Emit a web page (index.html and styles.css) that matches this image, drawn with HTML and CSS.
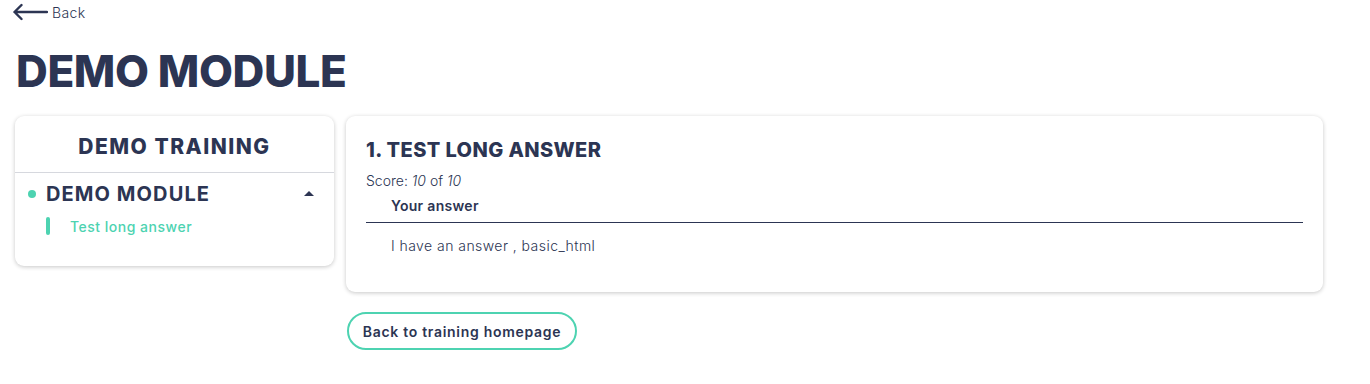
FILE: index.html
```html
<!DOCTYPE html>
<html lang="en">
<head>
<meta charset="utf-8">
<title>Demo Module</title>
<link rel="stylesheet" href="styles.css">
</head>
<body>
<div class="page">
  <a class="back" href="#">
    <svg class="back-arrow" width="36" height="18" viewBox="0 0 36 18" aria-hidden="true">
      <path d="M35 9H2.5M9.5 2L2.5 9l7 7" fill="none" stroke="#2c3553" stroke-width="2.4" stroke-linecap="round" stroke-linejoin="round"/>
    </svg>
    <span>Back</span>
  </a>
  <h1 class="page-title">DEMO MODULE</h1>
  <div class="layout">
    <aside class="sidebar">
      <div class="sidebar-head">DEMO TRAINING</div>
      <div class="module-row">
        <span class="dot"></span>
        <span class="module-name">DEMO MODULE</span>
        <span class="caret"></span>
      </div>
      <div class="sub-item">
        <span class="bar"></span>
        <span class="sub-text">Test long answer</span>
      </div>
    </aside>
    <main class="content">
      <section class="card">
        <h2 class="q-title">1. TEST LONG ANSWER</h2>
        <div class="score">Score: <em>10</em> of <em>10</em></div>
        <div class="answer-head">Your answer</div>
        <div class="answer-text">I have an answer , basic_html</div>
      </section>
      <button class="home-btn">Back to training homepage</button>
    </main>
  </div>
</div>
</body>
</html>
```

FILE: styles.css
```css
* { box-sizing: border-box; }
body {
  margin: 0;
  background: #fff;
  font-family: Inter, "Noto Sans", sans-serif;
  color: #2c3553;
}
.page {
  padding: 0 47px 0 15px;
}
.back {
  display: flex;
  align-items: center;
  gap: 4px;
  height: 24px;
  color: #2c3553;
  text-decoration: none;
  font-size: 14px;
  font-weight: 300;
  letter-spacing: 0.4px;
  margin-left: -3px;
}
.back-arrow { display: block; }
.page-title {
  margin: 20px 0 18px 1px;
  font-size: 44px;
  line-height: 54px;
  font-weight: 800;
  letter-spacing: -0.4px;
}
.layout {
  display: flex;
  gap: 12px;
  align-items: flex-start;
}
.sidebar {
  width: 319px;
  flex: none;
  background: #fff;
  border-radius: 9px;
  box-shadow: 0 1px 4px rgba(0,0,0,0.22);
  padding-bottom: 30px;
}
.sidebar-head {
  height: 57px;
  border-bottom: 1px solid #d6d8de;
  text-align: center;
  font-size: 21px;
  font-weight: 800;
  padding-top: 19px;
  line-height: 24px;
  letter-spacing: 1.5px;
}
.module-row {
  display: flex;
  align-items: center;
  padding: 9px 20px 0 13px;
  height: 33px;
}
.dot {
  width: 8px;
  height: 8px;
  border-radius: 50%;
  background: #4dd3b1;
  margin-right: 10px;
}
.module-name {
  font-size: 20px;
  font-weight: 700;
  letter-spacing: 1.1px;
  flex: 1;
}
.caret {
  width: 0;
  height: 0;
  border-left: 5px solid transparent;
  border-right: 5px solid transparent;
  border-bottom: 5px solid #2c3553;
  margin-top: -2px;
}
.sub-item {
  display: flex;
  align-items: center;
  padding: 10px 0 0 31px;
  height: 30px;
}
.bar {
  width: 4px;
  height: 18px;
  border-radius: 2px;
  background: #4dd3b1;
  margin-right: 20px;
}
.sub-text {
  color: #4dd3b1;
  font-size: 14px;
  font-weight: 500;
  letter-spacing: 0.5px;
}
.content {
  flex: 1;
  min-width: 0;
}
.card {
  background: #fff;
  border-radius: 9px;
  box-shadow: 0 1px 4px rgba(0,0,0,0.22);
  padding: 22px 20px 37px 20px;
}
.q-title {
  margin: 0;
  font-size: 20px;
  line-height: 24px;
  font-weight: 800;
  letter-spacing: 0.4px;
}
.score {
  margin-top: 10px;
  font-size: 14px;
  line-height: 18px;
  font-weight: 300;
}
.score em { font-weight: 300; }
.answer-head {
  margin-top: 7px;
  padding: 0 0 7px 25px;
  font-size: 14px;
  line-height: 18px;
  font-weight: 600;
  letter-spacing: 0.3px;
  border-bottom: 1px solid #2c3553;
}
.answer-text {
  margin-top: 14px;
  padding-left: 25px;
  font-size: 14px;
  line-height: 18px;
  font-weight: 300;
  letter-spacing: 0.45px;
}
.home-btn {
  display: block;
  margin-top: 20px;
  margin-left: 1px;
  width: 230px;
  height: 38px;
  border: 2px solid #4dd3b1;
  border-radius: 19px;
  background: #fff;
  color: #2c3553;
  font-family: Inter, "Noto Sans", sans-serif;
  font-size: 14px;
  font-weight: 600;
  letter-spacing: 0.7px;
  cursor: pointer;
}
```
